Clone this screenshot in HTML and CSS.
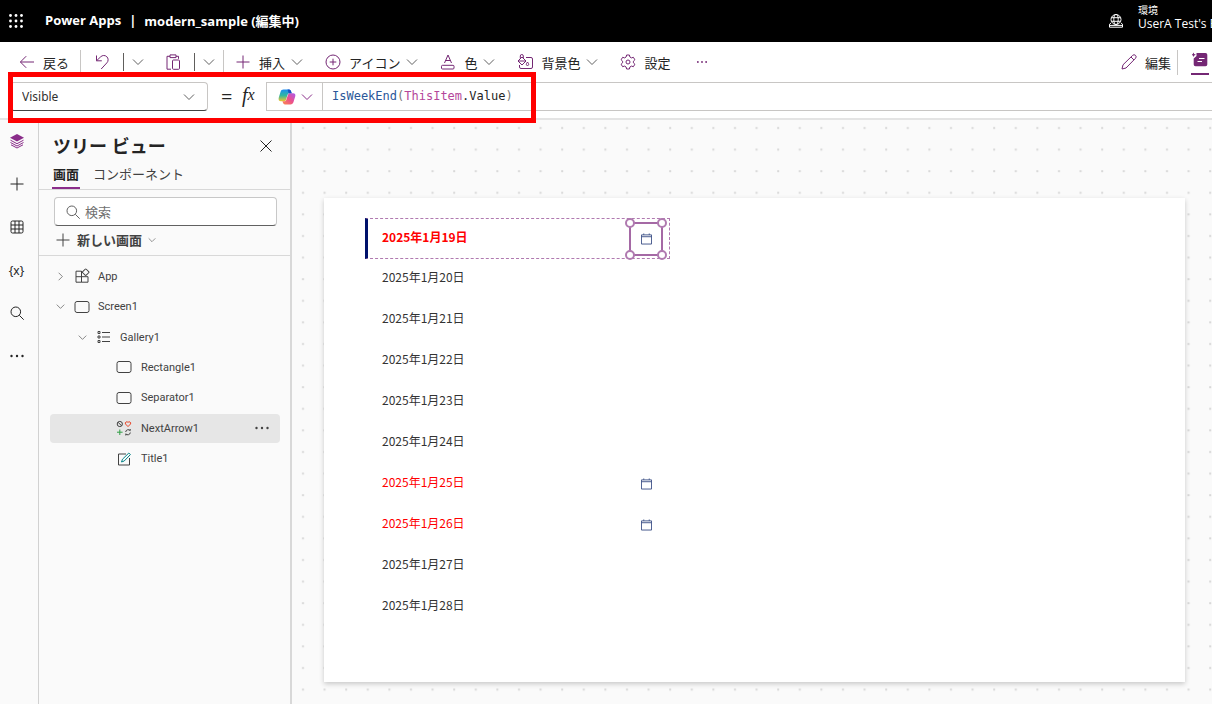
FILE: index.html
```html
<!DOCTYPE html>
<html lang="ja">
<head>
    <meta charset="UTF-8">
    <meta name="viewport" content="width=device-width, initial-scale=1.0">
    <title>Power Apps | modern_sample</title>
    <link rel="stylesheet" href="styles.css">
</head>
<body>
    <svg class="defs" aria-hidden="true">
        <symbol id="chevron" viewBox="0 0 12 12"><path d="M1 3.5l5 5 5-5"/></symbol>
        <symbol id="plus" viewBox="0 0 16 16"><path d="M8 1.5v13M1.5 8h13"/></symbol>
        <symbol id="search" viewBox="0 0 16 16"><circle cx="6.8" cy="6.8" r="4.8"/><path d="M10.3 10.3l4.4 4.4"/></symbol>
        <symbol id="dots" viewBox="0 0 16 16"><g class="solid"><circle cx="2.5" cy="8" r="1.2"/><circle cx="8" cy="8" r="1.2"/><circle cx="13.5" cy="8" r="1.2"/></g></symbol>
        <symbol id="rect" viewBox="0 0 16 16"><rect x="1" y="2.5" width="14" height="11" rx="2"/></symbol>
        <symbol id="calendar" viewBox="0 0 12 12"><path d="M.5 1.500h11v10H.5zM.5 3.500h11M3 0v1.500M9 0v1.500"/></symbol>
    </svg>

    <header class="topbar">
        <button class="waffle" aria-label="アプリ起動ツール">
            <svg viewBox="0 0 14 14"><g class="solid"><circle cx="1.5" cy="1.5" r="1.4"/><circle cx="7" cy="1.5" r="1.4"/><circle cx="12.5" cy="1.5" r="1.4"/><circle cx="1.5" cy="7" r="1.4"/><circle cx="7" cy="7" r="1.4"/><circle cx="12.5" cy="7" r="1.4"/><circle cx="1.5" cy="12.5" r="1.4"/><circle cx="7" cy="12.5" r="1.4"/><circle cx="12.5" cy="12.5" r="1.4"/></g></svg>
        </button>
        <h1 class="app-name"><span>Power Apps</span><span>|</span><span>modern_sample (編集中)</span></h1>
        <button class="environment">
            <svg class="icon" viewBox="0 0 16 16"><circle cx="8" cy="6.5" r="5"/><ellipse cx="8" cy="6.5" rx="2.2" ry="5"/><path d="M3.3 4.7h9.4M3.3 8.3h9.4M3 10l-1.5 1.2v3h13v-3L13 10M1.5 12.4h13"/></svg>
            <span class="env-text"><small>環境</small><span>UserA Test's E</span></span>
        </button>
    </header>

    <div class="toolbar">
        <button class="tool"><svg class="icon" viewBox="0 0 16 16"><path d="M15 8H1.5M7.2 2.2L1.4 8l5.8 5.8"/></svg>戻る</button>
        <span class="divider"></span>
        <button class="tool split" aria-label="元に戻す"><svg class="icon" viewBox="0 0 16 16"><path d="M2.5 1.5v5.3h5.3M2.7 6.6l4-3.8a4.3 4.3 0 0 1 6.2 6L7.2 15"/></svg></button>
        <span class="divider dark"></span>
        <button class="drop" aria-label="元に戻すの一覧"><svg class="chev"><use href="#chevron"/></svg></button>
        <button class="tool split" aria-label="貼り付け"><svg class="icon" viewBox="0 0 16 16"><path d="M5 2.3H2v12.9h4M11 2.3h2.5v2.5M5 .9h6v2.7H5z"/><rect x="7.5" y="6" width="7" height="9.3" rx="1"/></svg></button>
        <span class="divider dark"></span>
        <button class="drop" aria-label="貼り付けの一覧"><svg class="chev"><use href="#chevron"/></svg></button>
        <span class="divider"></span>
        <button class="tool"><svg class="icon"><use href="#plus"/></svg>挿入<svg class="chev"><use href="#chevron"/></svg></button>
        <button class="tool"><svg class="icon" viewBox="0 0 16 16"><circle cx="8" cy="8" r="7"/><path d="M8 4.7v6.6M4.7 8h6.6"/></svg>アイコン<svg class="chev"><use href="#chevron"/></svg></button>
        <button class="tool"><svg class="icon" viewBox="0 0 16 16"><path d="M4.500 9L8 1l3.500 8M5.700 6.500h4.600"/><rect x="1.500" y="11.300" width="12.500" height="3.700" rx="1"/></svg>色<svg class="chev"><use href="#chevron"/></svg></button>
        <button class="tool"><svg class="icon" viewBox="0 0 16 16"><path d="M9 3.500h5a1.500 1.500 0 0 1 1.500 1.500v8a1.500 1.500 0 0 1-1.500 1.500H4A1.500 1.500 0 0 1 2.500 13v-2M5 3l4 4-4 4-4-4zM1.300 7H9M3.300 4.500V2a1.500 1.500 0 0 1 3 0v2.300M10.500 8c1.600 2 1.600 3.500 0 3.500S8.900 10 10.500 8z"/></svg>背景色<svg class="chev"><use href="#chevron"/></svg></button>
        <button class="tool"><svg class="icon" viewBox="0 0 16 16"><path d="M6.6 1h2.8l.5 2 1.500.9 2-.6 1.500 2.500-1.500 1.400v1.600l1.500 1.400-1.500 2.500-2-.6-1.500.9-.5 2H6.600l-.5-2-1.500-.9-2 .6-1.500-2.500 1.500-1.400V7.200L1.100 5.800l1.500-2.500 2 .6L6.100 3z"/><circle cx="8" cy="8" r="2"/></svg>設定</button>
        <button class="tool more" aria-label="その他"><svg class="icon small"><use href="#dots"/></svg></button>
        <span class="spacer"></span>
        <button class="tool edit"><svg class="icon" viewBox="0 0 16 16"><path d="M1 15l1-4.200L11.600 1.400a1.900 1.900 0 0 1 2.900 2.900L5 14zM10 3l3 3"/></svg>編集</button>
        <span class="divider"></span>
        <button class="assistant" aria-label="Copilot"><svg viewBox="0 0 16 16"><path class="solid" d="M4.500 1h9a1.800 1.800 0 0 1 1.800 1.800v9.700a1.800 1.800 0 0 1-1.800 1.800h-10a1.800 1.800 0 0 1-1.800-1.800V6.500L4.500 4z"/><path class="solid" d="M1.500.5l.7 1.600 1.600.7-1.600.7-.7 1.600-.7-1.600-1.200-.7 1.200-.7z"/><path class="lines" d="M7 6.500h5.500M5.500 9.500H10"/></svg></button>
    </div>

    <div class="formula-row">
        <div class="property">
            <select aria-label="プロパティ"><option>Visible</option></select>
            <svg class="chev"><use href="#chevron"/></svg>
        </div>
        <span class="equals">=</span>
        <span class="fx">f<sup>x</sup></span>
        <div class="formula">
            <button class="copilot" aria-label="Copilot">
                <svg class="logo" viewBox="0 0 18 16">
                    <defs>
                        <linearGradient id="cool" x1="0" y1="0" x2="0" y2="1"><stop offset="0" stop-color="#1b8df2"/><stop offset=".5" stop-color="#2fb7a0"/><stop offset="1" stop-color="#f5c52c"/></linearGradient>
                        <linearGradient id="warm" x1="1" y1="0" x2="0" y2="1"><stop offset="0" stop-color="#a85bf0"/><stop offset=".5" stop-color="#ec4f8c"/><stop offset="1" stop-color="#fb8a4a"/></linearGradient>
                    </defs>
                    <path fill="url(#cool)" d="M5.500.5H11c1.300 0 1.800 1 2.200 2.200l.5 1.500h-2c-1.200 0-1.800.6-2.100 1.600L8 10.700c-.4 1.200-1 1.600-2.300 1.600H3C.8 12.300.2 10.500.8 8.500l1.700-5.600C3 1.300 4 .5 5.500.5z"/>
                    <path fill="url(#warm)" d="M12.500 15.500H7c-1.300 0-1.800-1-2.200-2.200l-.4-1h1.800c1.200 0 1.800-.6 2.100-1.600L10 5.800c.4-1.200 1-1.600 2.300-1.600H15c2.200 0 2.800 1.300 2.200 3.300l-1.700 5.600c-.5 1.600-1.500 2.400-3 2.400z"/>
                    <path fill="#1a4fc4" d="M9.500.5H11c1.300 0 1.800 1 2.200 2.200l.5 1.500h-3z"/>
                </svg>
                <svg class="chev"><use href="#chevron"/></svg>
            </button>
            <code class="editor" role="textbox" aria-label="数式" contenteditable="true" spellcheck="false"><span class="fn">IsWeekEnd</span><span class="paren">(</span><span class="this">ThisItem</span>.Value<span class="paren">)</span></code>
        </div>
        <div class="highlight"></div>
    </div>

    <div class="workspace">
        <nav class="rail">
            <button class="active" aria-label="ツリー ビュー"><svg viewBox="0 0 16 16"><path class="solid" d="M8 1l7 3.700-7 3.800-7-3.800z"/><path d="M1.500 7.200L8 10.700l6.500-3.500M1.500 9.500L8 13l6.500-3.500M2 11.800l6 3.200 6-3.200"/></svg></button>
            <button aria-label="挿入"><svg><use href="#plus"/></svg></button>
            <button aria-label="データ"><svg viewBox="0 0 16 16"><rect x="2" y="2" width="12" height="12" rx="1.500"/><path d="M6 2v12M10 2v12M2 6h12M2 10h12"/></svg></button>
            <button class="vars" aria-label="変数">{x}</button>
            <button aria-label="検索"><svg><use href="#search"/></svg></button>
            <button aria-label="その他"><svg><use href="#dots"/></svg></button>
        </nav>

        <aside class="tree-view">
            <div class="tree-head">
                <h2>ツリー ビュー</h2>
                <button class="close" aria-label="閉じる"><svg viewBox="0 0 16 16"><path d="M2.500 2.500l11 11M13.500 2.500l-11 11"/></svg></button>
            </div>
            <div class="tabs" role="tablist">
                <button role="tab" aria-selected="true" class="selected">画面</button>
                <button role="tab" aria-selected="false">コンポーネント</button>
            </div>
            <label class="search">
                <svg><use href="#search"/></svg>
                <input type="text" placeholder="検索" aria-label="検索">
            </label>
            <button class="new-screen"><svg><use href="#plus"/></svg>新しい画面<svg class="chev"><use href="#chevron"/></svg></button>
            <ul class="tree">
                <li class="level1"><svg class="chev right"><use href="#chevron"/></svg><svg viewBox="0 0 16 16"><path d="M2 3.200h5.500v11H2zM7.500 8.700H14v5.500H7.500M2 8.700h5.500M7.500 3.200v5.500"/><rect x="9.200" y="1.700" width="5" height="5" rx=".8" transform="rotate(45 11.700 4.200)"/></svg>App</li>
                <li class="level1"><svg class="chev"><use href="#chevron"/></svg><svg><use href="#rect"/></svg>Screen1</li>
                <li class="level2"><svg class="chev"><use href="#chevron"/></svg><svg viewBox="0 0 16 16"><path d="M6 3.500h8M6 8h8M6 12.500h8M2 2.500h2v2H2zM2 7h2v2H2zM2 11.500h2v2H2z"/></svg>Gallery1</li>
                <li class="level3"><svg><use href="#rect"/></svg>Rectangle1</li>
                <li class="level3"><svg><use href="#rect"/></svg>Separator1</li>
                <li class="level3 current"><svg viewBox="0 0 16 16"><circle cx="3.800" cy="4" r="2.600"/><path d="M2 2.200l3.600 3.600M9.700 12a2.500 2.500 0 0 1 4.500-1.300V9M14.300 12.500a2.500 2.500 0 0 1-4.500 1.300v1.700"/><path class="red" d="M12 6.600L9.500 4a1.400 1.400 0 0 1 2.500-1.500A1.400 1.400 0 0 1 14.500 4z"/><path class="green" d="M3.800 9.500v5.500M1 12.200h5.600"/></svg>NextArrow1<button class="row-more" aria-label="その他の操作"><svg><use href="#dots"/></svg></button></li>
                <li class="level3"><svg viewBox="0 0 16 16"><path d="M10 3H2.500v11h11V7"/><path class="teal" d="M5.500 11l1-2.800L12.800 2l1.600 1.600-6.200 6.400z"/></svg>Title1</li>
            </ul>
        </aside>

        <main class="canvas">
            <svg class="grid-dots" aria-hidden="true">
                <defs><pattern id="dot" x="1" y="-2" width="21.6" height="21.6" patternUnits="userSpaceOnUse"><rect x="9" y="9" width="2" height="2" fill="#d8d8d8"/></pattern></defs>
                <rect width="100%" height="100%" fill="url(#dot)"/>
            </svg>
            <section class="screen">
                <ol class="gallery">
                    <li class="weekend first">
                        <span>2025年1月19日</span>
                        <div class="selection"><svg><use href="#calendar"/></svg><i></i><i></i><i></i><i></i></div>
                    </li>
                    <li><span>2025年1月20日</span></li>
                    <li><span>2025年1月21日</span></li>
                    <li><span>2025年1月22日</span></li>
                    <li><span>2025年1月23日</span></li>
                    <li><span>2025年1月24日</span></li>
                    <li class="weekend"><span>2025年1月25日</span><svg><use href="#calendar"/></svg></li>
                    <li class="weekend"><span>2025年1月26日</span><svg><use href="#calendar"/></svg></li>
                    <li><span>2025年1月27日</span></li>
                    <li><span>2025年1月28日</span></li>
                </ol>
            </section>
        </main>
    </div>
</body>
</html>
```
FILE: styles.css
```css
* { box-sizing: border-box; }
body {
    display: flex;
    flex-direction: column;
    height: 100vh;
    margin: 0;
    overflow: hidden;
    background: #fafafa;
    color: #242424;
    font-family: "Noto Sans", "Noto Sans CJK JP", sans-serif;
    font-size: 13px;
}
button {
    display: flex;
    align-items: center;
    padding: 0;
    border: none;
    background: none;
    color: inherit;
    font: inherit;
    white-space: nowrap;
    cursor: pointer;
}
svg {
    flex: none;
    width: 16px;
    height: 16px;
    fill: none;
    stroke: currentColor;
    stroke-width: 1;
}
.solid { fill: currentColor; stroke: none; }
.defs { position: absolute; width: 0; height: 0; }
.chev { width: 12px; height: 12px; color: #616161; }

/* top bar */
.topbar {
    display: flex;
    align-items: center;
    flex: none;
    height: 42px;
    padding-left: 9px;
    background: #000;
    color: #fff;
    font-family: "Open Sans", "Noto Sans CJK JP", sans-serif;
}
.waffle svg { width: 14px; height: 14px; }
.app-name {
    display: flex;
    gap: 8px;
    flex: 1;
    margin: 0 0 0 22px;
    padding-bottom: 2px;
    font-size: 13px;
    font-weight: 700;
}
.environment {
    gap: 14px;
    width: 104px;
    font-size: 12px;
    text-align: left;
}
.env-text { display: flex; flex-direction: column; line-height: 14px; padding-bottom: 9px; }
.env-text small { font-size: 10px; }

/* command bar */
.toolbar {
    display: flex;
    align-items: center;
    flex: none;
    height: 40px;
    padding-left: 8px;
    background: #fff;
}
.tool { gap: 6px; height: 32px; padding: 0 11px; }
.tool .icon { margin-right: 2px; color: #742774; }
.split { padding: 0 13px; }
.split .icon { margin: 0; }
.drop { height: 32px; padding: 0 8px; }
.more { padding-left: 15px; }
.tool .small { width: 12px; }
.edit { padding-right: 6px; }
.spacer { flex: 1; }
.divider { flex: none; width: 1px; height: 25px; background: #c8c6c4; }
.divider.dark { height: 18px; background: #605e5c; }
.assistant {
    align-self: flex-end;
    height: 28px;
    margin: 0 3px 7px 13px;
    padding: 0 1px;
    border-bottom: 2px solid #742774;
    color: #742774;
}
.assistant .lines { stroke: #fff; }

/* formula bar */
.formula-row {
    position: relative;
    display: flex;
    flex: none;
    height: 38px;
    padding: 0 0 7px 10px;
    border-bottom: 2px solid #e4e4e4;
    background: #fff;
}
.property { display: grid; align-items: center; width: 198px; }
.property > * { grid-area: 1 / 1; }
.property select {
    align-self: stretch;
    padding: 0 11px;
    border: 1px solid #c8c6c4;
    border-bottom-color: #424242;
    border-radius: 4px;
    background: #fff;
    color: #323130;
    appearance: none;
    font: inherit;
    font-size: 12px;
}
.property .chev { justify-self: end; margin-right: 13px; pointer-events: none; }
.equals { width: 34px; padding-left: 13px; font-size: 20px; line-height: 30px; }
.fx {
    width: 24px;
    font-family: "Liberation Serif", serif;
    font-size: 20px;
    font-style: italic;
    line-height: 27px;
}
.fx sup { font-size: 16px; line-height: 0; vertical-align: 2px; }
.formula { display: flex; flex: 1; border: 1px solid #c8c6c4; border-right: none; }
.copilot { gap: 5px; width: 56px; padding-left: 11px; border-right: 1px solid #c8c6c4; }
.copilot .logo { width: 18px; stroke: none; }
.copilot .chev { color: #8a2d8a; }
.editor {
    flex: 1;
    padding-left: 9px;
    outline: none;
    background: #fff;
    color: #242424;
    font-family: "DejaVu Sans Mono", monospace;
    font-size: 12px;
    line-height: 26px;
}
.fn { color: #2b579a; }
.this { color: #b4479a; }
.paren { color: #797775; }
.highlight {
    position: absolute;
    top: -10px;
    left: 8px;
    width: 528px;
    height: 51px;
    border: 5px solid #f00;
    pointer-events: none;
    z-index: 1;
}

.workspace { display: flex; flex: 1; min-height: 0; }

/* left rail */
.rail {
    display: flex;
    flex-direction: column;
    width: 39px;
    border-right: 1px solid #d1d1d1;
}
.rail button { justify-content: center; height: 43px; padding: 0 5px 1px 0; }
.rail .active { color: #8a2d8a; }
.rail .vars { font-size: 12px; }

/* tree view */
.tree-view {
    display: flex;
    flex-direction: column;
    width: 253px;
    border-right: 2px solid #d8d8d8;
}
.tree-head { display: flex; align-items: center; justify-content: space-between; height: 40px; padding: 11px 16px 0 14px; }
.tree-head h2 { margin: 0; font-size: 18px; line-height: 24px; }
.tabs { display: flex; gap: 12px; height: 30px; padding-left: 13px; border-bottom: 1px solid #d8d8d8; }
.tabs button { padding: 0 1px; border-bottom: 2px solid transparent; color: #424242; }
.tabs .selected { border-color: #8a2d8a; color: #242424; font-weight: 700; }
.search {
    display: flex;
    align-items: center;
    gap: 4px;
    height: 29px;
    margin: 7px 13px 0 15px;
    padding: 0 10px;
    border: 1px solid #c8c8c8;
    border-bottom-color: #616161;
    border-radius: 4px;
    background: #fff;
    color: #616161;
}
.search input { flex: 1; min-width: 0; padding: 0; border: none; outline: none; background: none; font: inherit; }
.search input::placeholder { color: #707070; }
.new-screen { gap: 6px; height: 30px; padding: 0 0 2px 16px; border-bottom: 1px solid #d8d8d8; color: #424242; font-weight: 700; }
.new-screen .chev { width: 8px; height: 8px; }
.tree {
    display: grid;
    grid-template-rows: repeat(7, 1fr);
    align-items: center;
    height: 213px;
    margin: 5px 10px 0 11px;
    padding: 0;
    color: #424242;
    font-family: Roboto, sans-serif;
    font-size: 11px;
    list-style: none;
}
.tree li { display: flex; align-items: center; gap: 8px; height: 29px; border-radius: 4px; }
.tree .chev { width: 9px; height: 9px; margin: 0 1px; }
.tree .right { transform: rotate(-90deg); }
.tree .level1 { padding-left: 5px; }
.tree .level2 { padding-left: 27px; }
.tree .level3 { gap: 9px; padding-left: 66px; }
.tree .current { background: #e6e6e6; }
.row-more { margin-left: auto; padding-right: 10px; }
.red { stroke: #e8472b; }
.green { stroke: #2f9e44; }
.teal { stroke: #038387; }

/* canvas */
.canvas {
    position: relative;
    display: flex;
    flex: 1;
    padding: 78px 27px 22px 32px;
}
.grid-dots { position: absolute; inset: 0; width: 100%; height: 100%; stroke: none; }
.screen {
    position: relative;
    flex: 1;
    padding: 20px 41px;
    background: #fff;
    box-shadow: 0 2px 5px rgba(0, 0, 0, 0.2);
}
.gallery {
    max-width: 305px;
    margin: 0;
    padding: 0;
    color: #333;
    font-family: "Noto Sans CJK JP", sans-serif;
    font-size: 12px;
    list-style: none;
}
.gallery li {
    display: flex;
    align-items: center;
    justify-content: space-between;
    height: 41px;
    padding: 0 18px 2px 17px;
}
.gallery li span { padding-bottom: 5px; }
.gallery .weekend span { color: #f00; }
.gallery svg { width: 11px; height: 12px; color: #3b4f86; }
.gallery .first {
    padding: 0 6px 0 14px;
    border: 1px dashed #b07ab0;
    border-left: 3px solid #00126b;
    font-weight: 700;
}
.selection {
    position: relative;
    display: flex;
    align-items: center;
    justify-content: center;
    width: 34px;
    height: 34px;
    border: 2px solid #a569a5;
}
.selection i {
    position: absolute;
    width: 10px;
    height: 10px;
    border: 2px solid #b07ab0;
    border-radius: 50%;
    background: #fff;
}
.selection i:nth-of-type(1) { top: -6px; left: -6px; }
.selection i:nth-of-type(2) { top: -6px; right: -6px; }
.selection i:nth-of-type(3) { bottom: -6px; left: -6px; }
.selection i:nth-of-type(4) { bottom: -6px; right: -6px; }
```
